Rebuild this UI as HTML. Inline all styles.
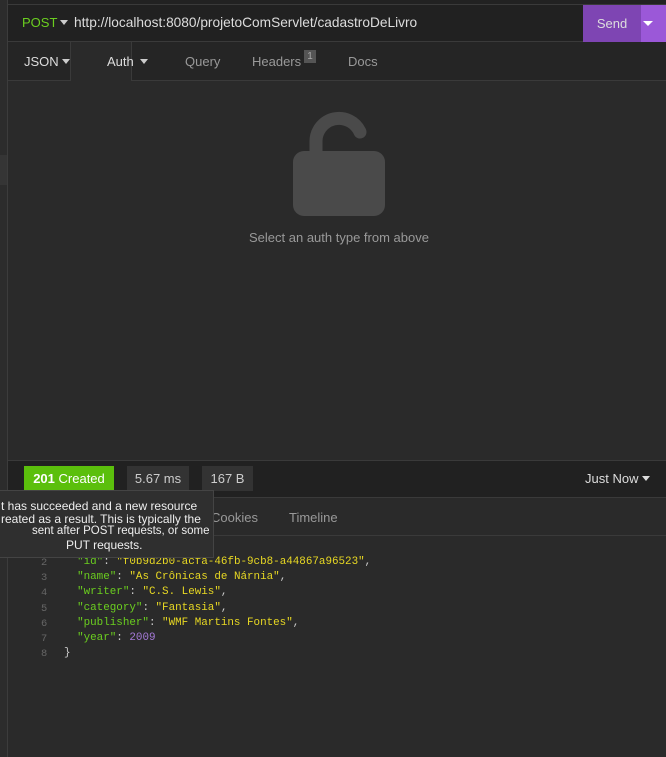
<!DOCTYPE html>
<html><head><style>
body{margin:0;width:666px;height:757px;background:#2a2a2a;font-family:"Liberation Sans",sans-serif;position:relative;overflow:hidden;color:#ccc}
.a{position:absolute;white-space:nowrap}
.tl{position:absolute;font-size:12px;color:#eee;white-space:nowrap}
</style></head><body>
<div class="a" style="left:0;top:0;width:666px;height:4px;background:#222"></div>
<div class="a" style="left:0;top:0;width:7px;height:757px;background:#2c2c2c;border-right:1px solid #3c3c3c"></div>
<div class="a" style="left:0;top:155px;width:7px;height:30px;background:#353535"></div>
<div class="a" style="left:8px;top:4px;width:658px;height:38px;background:#212121;border-top:1px solid #3a3a3a;border-bottom:1px solid #3a3a3a;box-sizing:border-box"></div>
<div class="a" style="left:22px;top:15px;font-size:13px;color:#6bce1f">POST</div>
<div class="a" style="left:60px;top:20px;width:0;height:0;border-left:4px solid transparent;border-right:4px solid transparent;border-top:5px solid #ccc"></div>
<div class="a" style="left:74px;top:15px;font-size:13.7px;color:#ddd">http://localhost:8080/projetoComServlet/cadastroDeLivro</div>
<div class="a" style="left:583px;top:5px;width:58px;height:37px;background:#7e45b3;color:#ddd;font-size:13px;line-height:37px;text-align:center">Send</div>
<div class="a" style="left:641px;top:5px;width:25px;height:37px;background:#9b58d8"></div>
<div class="a" style="left:643px;top:21px;width:0;height:0;border-left:5px solid transparent;border-right:5px solid transparent;border-top:5px solid #fff"></div>
<div class="a" style="left:8px;top:42px;width:658px;height:39px;background:#252525;border-bottom:1px solid #3a3a3a;box-sizing:border-box"></div>
<div class="a" style="left:70px;top:42px;width:62px;height:39px;background:#2a2a2a;border-left:1px solid #3a3a3a;border-right:1px solid #3a3a3a;box-sizing:border-box"></div>
<div class="a" style="left:24px;top:54px;font-size:13px;color:#ddd">JSON</div>
<div class="a" style="left:62px;top:59px;border-left:4px solid transparent;border-right:4px solid transparent;border-top:5px solid #ccc"></div>
<div class="a" style="left:107px;top:54px;font-size:13px;color:#ddd">Auth</div>
<div class="a" style="left:140px;top:59px;border-left:4px solid transparent;border-right:4px solid transparent;border-top:5px solid #ccc"></div>
<div class="a" style="left:185px;top:54px;font-size:13px;color:#999">Query</div>
<div class="a" style="left:252px;top:54px;font-size:13px;color:#999">Headers</div>
<div class="a" style="left:304px;top:50px;width:12px;height:13px;background:#555;color:#aaa;font-size:10px;text-align:center;line-height:13px">1</div>
<div class="a" style="left:348px;top:54px;font-size:13px;color:#999">Docs</div>
<svg class="a" style="left:280px;top:100px" width="120" height="130"><path d="M36 56 V42 A23 23 0 0 1 80 32" fill="none" stroke="#4a4a4a" stroke-width="13" stroke-linecap="round"/><rect x="13" y="51" width="92" height="65" rx="11" fill="#4a4a4a"/></svg>
<div class="a" style="left:0;top:230px;width:678px;text-align:center;font-size:13px;color:#999">Select an auth type from above</div>
<div class="a" style="left:8px;top:460px;width:658px;height:38px;background:#212121;border-top:1px solid #3a3a3a;border-bottom:1px solid #3a3a3a;box-sizing:border-box"></div>
<div class="a" style="left:24px;top:466px;width:90px;height:25px;background:#5bbf0c;color:#fff;font-size:13px;line-height:25px;text-align:center"><b>201</b> Created</div>
<div class="a" style="left:127px;top:466px;width:62px;height:25px;background:#333;color:#ccc;font-size:13px;line-height:25px;text-align:center">5.67 ms</div>
<div class="a" style="left:202px;top:466px;width:51px;height:25px;background:#333;color:#ccc;font-size:13px;line-height:25px;text-align:center">167 B</div>
<div class="a" style="left:585px;top:471px;font-size:13px;color:#ddd">Just Now</div>
<div class="a" style="left:642px;top:476px;border-left:4px solid transparent;border-right:4px solid transparent;border-top:5px solid #ddd"></div>
<div class="a" style="left:8px;top:535px;width:658px;height:1px;background:#3a3a3a"></div>
<div class="a" style="left:211px;top:510px;font-size:13px;color:#999">Cookies</div>
<div class="a" style="left:289px;top:510px;font-size:13px;color:#999">Timeline</div>
<div class="a" style="font-family:'Liberation Mono',monospace;font-size:10.4px;left:41px;top:556px;line-height:15.2px;white-space:pre;color:#666">2
3
4
5
6
7
8</div>
<div class="a" style="font-family:'Liberation Mono',monospace;font-size:10.9px;left:64px;top:555px;line-height:15.2px;white-space:pre;color:#ccc">  <span style="color:#6bce1f">"id"</span>: <span style="color:#e8d823">"f0b9d2b0-acfa-46fb-9cb8-a44867a96523"</span>,
  <span style="color:#6bce1f">"name"</span>: <span style="color:#e8d823">"As Crônicas de Nárnia"</span>,
  <span style="color:#6bce1f">"writer"</span>: <span style="color:#e8d823">"C.S. Lewis"</span>,
  <span style="color:#6bce1f">"category"</span>: <span style="color:#e8d823">"Fantasia"</span>,
  <span style="color:#6bce1f">"publisher"</span>: <span style="color:#e8d823">"WMF Martins Fontes"</span>,
  <span style="color:#6bce1f">"year"</span>: <span style="color:#a57ad8">2009</span>
}</div>
<div class="a" style="left:-1px;top:490px;width:215px;height:68px;background:#2f2f2f;border:1px solid #444;box-sizing:border-box;overflow:hidden">
<div class="tl" style="left:1px;top:8px">t has succeeded and a new resource</div>
<div class="tl" style="left:1px;top:21px">reated as a result. This is typically the</div>
<div class="tl" style="left:32px;top:34px;font-size:11.5px">sent after POST requests, or some</div>
<div class="tl" style="left:66px;top:47px">PUT requests.</div>
</div>
</body></html>
